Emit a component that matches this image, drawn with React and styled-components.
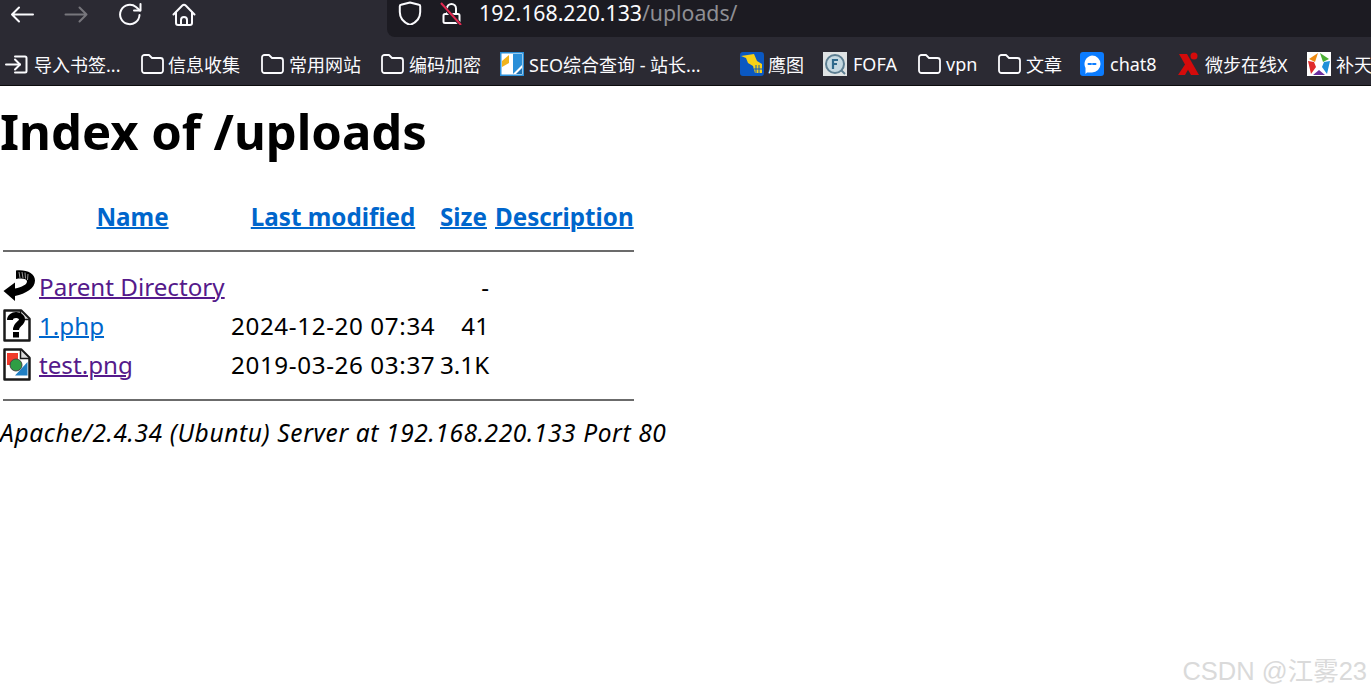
import React from 'react'
import styled, { createGlobalStyle } from 'styled-components'

const UI_FONT = '"Noto Sans", "Noto Sans CJK SC", sans-serif'

const GlobalStyle = createGlobalStyle`
  html, body {
    margin: 0;
    padding: 0;
    height: 100%;
    overflow: hidden;
    background: #fff;
  }
  #root {
    height: 100%;
  }
`

const S = {
  Window: styled.div`
    position: relative;
    height: 694px;
    overflow: hidden;
    font-family: ${UI_FONT};
  `,
  Toolbar: styled.div`
    display: flex;
    height: 37px;
    background: #2b2a33;
  `,
  NavButtons: styled.div`
    display: flex;
    width: 387px;
    padding: 0 0 10px 10px;
    box-sizing: border-box;
    align-items: center;
    gap: 30px;
  `,
  NavButton: styled.span`
    display: flex;
    width: 24px;
    height: 24px;
    align-items: center;
    justify-content: center;
    color: ${({ $disabled }) => ($disabled ? '#77767c' : '#fbfbfe')};
  `,
  UrlBar: styled.div`
    flex: 1;
    display: flex;
    align-items: center;
    height: 37px;
    padding: 0 0 11px 11px;
    box-sizing: border-box;
    background: #1c1b22;
    border-bottom-left-radius: 8px;
    color: #fbfbfe;
  `,
  UrlIcon: styled.span`
    display: flex;
    width: 24px;
    justify-content: center;
    margin-right: 17px;
  `,
  Url: styled.div`
    margin-left: -1px;
    font-size: 21.25px;
    line-height: 26px;
    white-space: nowrap;
  `,
  UrlPath: styled.span`
    color: #8f8f94;
  `,
  Bookmarks: styled.div`
    display: flex;
    height: 49px;
    padding: 5px 0 0 5px;
    box-sizing: border-box;
    align-items: center;
    overflow: hidden;
    background: #2b2a33;
    border-bottom: 1px solid #0c0c0d;
    color: #fbfbfe;
  `,
  Bookmark: styled.div`
    flex: 0 0 ${({ $width }) => $width}px;
    display: flex;
    align-items: center;
    height: 100%;
    overflow: hidden;
    font-size: 18px;
    white-space: nowrap;
  `,
  BookmarkIcon: styled.span`
    flex: 0 0 24px;
    display: flex;
    align-items: center;
    margin-right: ${({ $gap }) => $gap ?? 5}px;
  `,
  Page: styled.main`
    font-family: ${UI_FONT};
    font-size: 24.2px;
    color: #000;
  `,
  Title: styled.h1`
    margin: 0;
    padding-top: 13px;
    font-size: 49px;
    line-height: 64px;
    font-weight: 700;
    white-space: nowrap;
  `,
  Table: styled.table`
    margin-top: 34px;
    width: 637px;
    table-layout: fixed;
    border-collapse: separate;
    border-spacing: 3px 0;
    line-height: 37px;
  `,
  Col: styled.col`
    width: ${({ $width }) => $width}px;
  `,
  Heading: styled.th`
    padding: 1px 2px 1px 0;
    font-weight: 700;
    text-align: center;
    white-space: nowrap;
  `,
  DescriptionHeading: styled.th`
    padding: 1px 0 1px 3px;
    font-weight: 700;
    text-align: left;
    white-space: nowrap;
  `,
  Cell: styled.td`
    padding: 0 0 2px;
    height: 37px;
    text-align: ${({ $right }) => ($right ? 'right' : 'left')};
    white-space: nowrap;
    vertical-align: middle;
  `,
  DateCell: styled.td`
    padding: 0 0 2px;
    height: 37px;
    letter-spacing: 0.62px;
    white-space: nowrap;
    vertical-align: middle;
  `,
  IconCell: styled.td`
    padding: 0 0 2px;
    height: 37px;
    vertical-align: middle;
    svg {
      display: block;
    }
  `,
  Rule: styled.hr`
    margin: ${({ $top }) => $top}px 0 ${({ $bottom }) => $bottom}px;
    border: 0;
    border-top: 2px solid #6b6b6b;
  `,
  RuleCell: styled.th`
    padding: 0;
    line-height: 0;
  `,
  Link: styled.a`
    color: ${({ $visited }) => ($visited ? '#551a8b' : '#0066cc')};
    text-decoration: underline;
    text-decoration-thickness: 2px;
  `,
  Address: styled.address`
    margin-top: 15px;
    font-size: 24.5px;
    letter-spacing: 0.62px;
    font-style: italic;
    line-height: 33px;
    white-space: nowrap;
  `,
  Watermark: styled.div`
    position: absolute;
    right: 4px;
    bottom: 8px;
    font-size: 25.5px;
    line-height: 30px;
    color: #dadada;
    font-family: "Liberation Sans", "Noto Sans CJK SC", sans-serif;
  `,
}

const Stroke = ({ children, width = 2 }) => (
  <svg width="24" height="24" viewBox="0 0 24 24" fill="none" stroke="currentColor" strokeWidth={width} strokeLinecap="round" strokeLinejoin="round">
    {children}
  </svg>
)

const BackArrow = () => (
  <Stroke>
    <path d="M2 12.500h21M9 5.500l-7 7 7 7" />
  </Stroke>
)

const ForwardArrow = () => (
  <Stroke>
    <path d="M1.500 12.500h21M15.500 5.500l7 7-7 7" />
  </Stroke>
)

const Reload = () => (
  <Stroke>
    <path d="M21.500 13a9.700 9.700 0 1 1-3.500-8L22 8.500" />
    <path d="M22.500 2v6.500H16" />
  </Stroke>
)

const Home = () => (
  <Stroke>
    <path d="M1.500 12.500 10.300 3.500a2.400 2.400 0 0 1 3.400 0L22.500 12.500" />
    <path d="M4 10.500V21a2 2 0 0 0 2 2h12a2 2 0 0 0 2-2V10.500" />
    <path d="M9 23v-5a3 3 0 0 1 6 0v5" />
  </Stroke>
)

const ShieldIcon = () => (
  <Stroke>
    <path d="M12 1.500 21 3.800a1.500 1.500 0 0 1 1.200 1.500V11c0 6.500-4 10.500-10.200 13C5.800 21.500 1.800 17.500 1.800 11V5.300A1.500 1.500 0 0 1 3 3.800z" />
  </Stroke>
)

const InsecureLock = () => (
  <svg width="24" height="24" viewBox="0 0 24 24" fill="none">
    <path d="M6 13h13a1.500 1.500 0 0 1 1.500 1.500v6a1.500 1.500 0 0 1-1.500 1.500H6a1.500 1.500 0 0 1-1.500-1.500v-6A1.500 1.500 0 0 1 6 13z" stroke="#fbfbfe" strokeWidth="2" />
    <path d="M8 13V7.500a4.500 4.500 0 0 1 9 0V13" stroke="#fbfbfe" strokeWidth="2" />
    <path d="M2 3l20 21" stroke="#1c1b22" strokeWidth="3.500" />
    <path d="M2 2l20 22" stroke="#e22850" strokeWidth="2" />
  </svg>
)

const ImportIcon = () => (
  <Stroke>
    <path d="M10 4.500h10a1.500 1.500 0 0 1 1.500 1.500v13a1.500 1.500 0 0 1-1.500 1.500H10" />
    <path d="M1 12.500h14" />
    <path d="M10 7.500l5 5-5 5" />
  </Stroke>
)

const FolderIcon = () => (
  <svg width="24" height="24" viewBox="0 0 24 24" fill="none" stroke="#fbfbfe" strokeWidth="1.800" strokeLinejoin="round">
    <path d="M1 5.500A2.500 2.500 0 0 1 3.500 3h4.500l3 3h8.500A2.500 2.500 0 0 1 22 8.500v10a2.500 2.500 0 0 1-2.500 2.500h-16A2.500 2.500 0 0 1 1 18.500z" />
  </svg>
)

const SeoIcon = () => (
  <svg width="24" height="24" viewBox="0 0 24 24">
    <rect width="24" height="24" fill="#2a8fd8" />
    <rect x="1.500" y="1.500" width="21" height="21" fill="#fff" />
    <path d="M2 9 9 3V11L2 15z" fill="#f0b31c" />
    <path d="M13 2h9v11l-9 9z" fill="#2a8fd8" />
    <path d="M16 22l6-6v6z" fill="#1c6fb0" />
  </svg>
)

const HawkIcon = () => (
  <svg width="24" height="24" viewBox="0 0 24 24">
    <rect width="24" height="24" rx="3" fill="#0a58c2" />
    <path d="M1 4 14 2l3 7 5 3v9h-7l-2-7-5-3-2-5z" fill="#f7d117" />
    <path d="M16 13v8M19 13v8M14 17h8" stroke="#0a58c2" strokeWidth="1" />
  </svg>
)

const FofaIcon = () => (
  <svg width="24" height="24" viewBox="0 0 24 24">
    <rect width="24" height="24" fill="#dfe3e4" />
    <circle cx="12" cy="12" r="9" fill="#c5d9e2" stroke="#5d7f92" strokeWidth="2" />
    <path d="M10 17V8h5M10 12h4" stroke="#2f6a8c" strokeWidth="2.200" fill="none" />
    <path d="M18 18l4 4" stroke="#5d7f92" strokeWidth="2" />
  </svg>
)

const ChatIcon = () => (
  <svg width="24" height="24" viewBox="0 0 24 24">
    <rect width="24" height="24" rx="3" fill="#0b7cff" />
    <path d="M12 3.500a8.500 8.500 0 0 1 0 17H7l-1.500 1.500V16A8.500 8.500 0 0 1 12 3.500z" fill="#fff" />
    <path d="M8.500 12h7" stroke="#0b7cff" strokeWidth="2" strokeDasharray="2.500 2" strokeLinecap="round" />
  </svg>
)

const WeiBuIcon = () => (
  <svg width="24" height="24" viewBox="0 0 24 24">
    <path d="M2 2h8l12 21h-8z" fill="#d40b0b" />
    <path d="M1 23 9 11l3 5-4 7z" fill="#d40b0b" />
    <circle cx="17" cy="4" r="3.500" fill="#d40b0b" />
  </svg>
)

const ButianIcon = () => (
  <svg width="24" height="24" viewBox="0 0 24 24">
    <rect width="24" height="24" fill="#fff" />
    <path d="M11 1 2 7l6 3z" fill="#ef8a12" />
    <path d="M13 1l9 6-6 3z" fill="#4caf35" />
    <path d="M1 9l6 1 2 5-5 7z" fill="#e02b2b" />
    <path d="M23 9l-6 1-2 5 5 7z" fill="#1f8fd8" />
    <path d="M6 23l6-5 6 5z" fill="#6b2fa0" />
  </svg>
)

const BackIcon = () => (
  <svg width="33" height="33" viewBox="0 0 33 33">
    <path d="M13 .5C24 -.5 32 3.500 32 10.500 32 18.500 23 23.500 12 26v5L.5 21 12 12.500v6c7-1.500 12-4 12-7 0-2.500-4-3.500-11-2.500z" fill="#000" />
    <path d="M16 2l1 6M19 2l1 6M22 2.500l.5 6M25 4l-.5 6" stroke="#999" strokeWidth="1" />
  </svg>
)

const PageIcon = ({ children }) => (
  <svg width="30" height="33" viewBox="0 0 30 33">
    <path d="M1.500 1.500H18L26.500 10V31.500H1.500z" fill="#fff" stroke="#1a1a1a" strokeWidth="2.500" strokeLinejoin="round" />
    <path d="M17.500 2V10.500H26" fill="#ddd" stroke="#1a1a1a" strokeWidth="1.500" />
    {children}
  </svg>
)

const UnknownIcon = () => (
  <PageIcon>
    <path d="M7 11C7 4.500 19 4.500 19 10.500 19 15 13 14.500 13 21" fill="none" stroke="#000" strokeWidth="6" />
    <rect x="10" y="23" width="6" height="5.500" fill="#000" />
  </PageIcon>
)

const ImageIcon = () => (
  <PageIcon>
    <rect x="4" y="5" width="11" height="12" fill="#f0392b" />
    <path d="M24.500 14v13.500H12z" fill="#1f7fc4" />
    <circle cx="13" cy="17" r="6" fill="#2f9e44" stroke="#444" strokeWidth="1" />
  </PageIcon>
)

const BOOKMARKS = [
  { width: 136, icon: <ImportIcon />, label: '导入书签...' },
  { width: 120, icon: <FolderIcon />, label: '信息收集', gap: 3 },
  { width: 120, icon: <FolderIcon />, label: '常用网站', gap: 4 },
  { width: 119, icon: <FolderIcon />, label: '编码加密', gap: 4 },
  { width: 240, icon: <SeoIcon />, label: 'SEO综合查询 - 站长...' },
  { width: 83, icon: <HawkIcon />, label: '鹰图', gap: 4 },
  { width: 95, icon: <FofaIcon />, label: 'FOFA', gap: 6 },
  { width: 80, icon: <FolderIcon />, label: 'vpn', gap: 4 },
  { width: 82, icon: <FolderIcon />, label: '文章', gap: 4 },
  { width: 97, icon: <ChatIcon />, label: 'chat8', gap: 6 },
  { width: 130, icon: <WeiBuIcon />, label: '微步在线X', gap: 4 },
  { width: 70, icon: <ButianIcon />, label: '补天', gap: 5 },
]

const FILES = [
  { icon: <BackIcon />, name: 'Parent Directory', modified: '', size: '-', visited: true },
  { icon: <UnknownIcon />, name: '1.php', modified: '2024-12-20 07:34', size: '41' },
  { icon: <ImageIcon />, name: 'test.png', modified: '2019-03-26 03:37', size: '3.1K', visited: true },
]

const App = () => (
  <S.Window>
    <GlobalStyle />
    <S.Toolbar>
      <S.NavButtons>
        <S.NavButton><BackArrow /></S.NavButton>
        <S.NavButton $disabled><ForwardArrow /></S.NavButton>
        <S.NavButton><Reload /></S.NavButton>
        <S.NavButton><Home /></S.NavButton>
      </S.NavButtons>
      <S.UrlBar>
        <S.UrlIcon><ShieldIcon /></S.UrlIcon>
        <S.UrlIcon><InsecureLock /></S.UrlIcon>
        <S.Url>
          192.168.220.133<S.UrlPath>/uploads/</S.UrlPath>
        </S.Url>
      </S.UrlBar>
    </S.Toolbar>

    <S.Bookmarks>
      {BOOKMARKS.map(({ width, icon, label, gap }) => (
        <S.Bookmark key={label} $width={width}>
          <S.BookmarkIcon $gap={gap}>{icon}</S.BookmarkIcon>
          {label}
        </S.Bookmark>
      ))}
    </S.Bookmarks>

    <S.Page>
      <S.Title>Index of /uploads</S.Title>
      <S.Table>
        <colgroup>
          <S.Col $width={33} />
          <S.Col $width={189} />
          <S.Col $width={206} />
          <S.Col $width={49} />
          <S.Col $width={142} />
        </colgroup>
        <thead>
          <tr>
            <S.Heading />
            <S.Heading><S.Link href="#name">Name</S.Link></S.Heading>
            <S.Heading><S.Link href="#modified">Last modified</S.Link></S.Heading>
            <S.Heading><S.Link href="#size">Size</S.Link></S.Heading>
            <S.DescriptionHeading><S.Link href="#description">Description</S.Link></S.DescriptionHeading>
          </tr>
          <tr>
            <S.RuleCell colSpan="5"><S.Rule $top={14} $bottom={16} /></S.RuleCell>
          </tr>
        </thead>
        <tbody>
          {FILES.map(({ icon, name, modified, size, visited }) => (
            <tr key={name}>
              <S.IconCell>{icon}</S.IconCell>
              <S.Cell><S.Link href="#file" $visited={visited}>{name}</S.Link></S.Cell>
              <S.DateCell>{modified}</S.DateCell>
              <S.Cell $right>{size}</S.Cell>
              <S.Cell />
            </tr>
          ))}
          <tr>
            <S.RuleCell colSpan="5"><S.Rule $top={14} $bottom={0} /></S.RuleCell>
          </tr>
        </tbody>
      </S.Table>
      <S.Address>Apache/2.4.34 (Ubuntu) Server at 192.168.220.133 Port 80</S.Address>
    </S.Page>

    <S.Watermark>CSDN @江雾23</S.Watermark>
  </S.Window>
)

export default App
